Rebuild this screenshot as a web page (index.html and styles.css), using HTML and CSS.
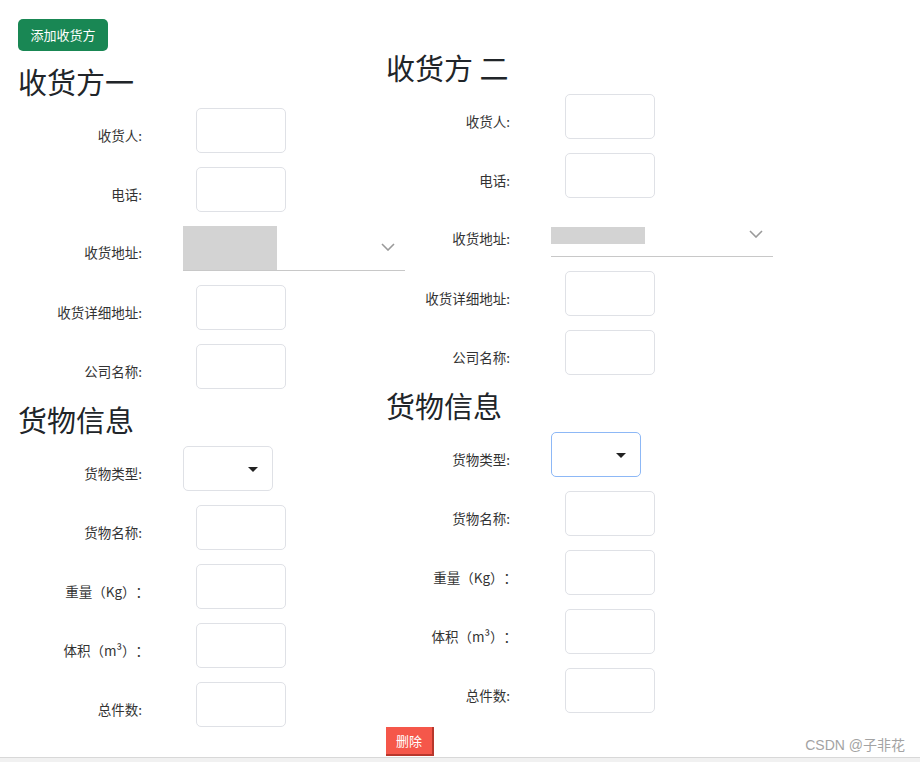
FILE: index.html
```html
<!DOCTYPE html>
<html lang="zh-CN">
<head>
<meta charset="utf-8">
<title>收货方</title>
<link rel="stylesheet" href="styles.css">
</head>
<body>
<div class="page">
  <div class="cols">
    <section class="col col-left">
      <button class="btn-add" type="button">添加收货方</button>
      <h2 class="title">收货方一</h2>
      <div class="row"><span class="label">收货人:</span><div class="input"></div></div>
      <div class="row"><span class="label">电话:</span><div class="input"></div></div>
      <div class="row"><span class="label label-sel">收货地址:</span>
        <div class="addr addr-tall"><span class="addr-block"></span>
          <svg class="chev" width="14" height="8" viewBox="0 0 14 8"><path d="M1 1 L7 7 L13 1" fill="none" stroke="#9a9a9a" stroke-width="1.6"/></svg>
        </div>
      </div>
      <div class="row"><span class="label">收货详细地址:</span><div class="input"></div></div>
      <div class="row"><span class="label">公司名称:</span><div class="input"></div></div>
      <h2 class="title">货物信息</h2>
      <div class="row"><span class="label">货物类型:</span><div class="type"><span class="caret"></span></div></div>
      <div class="row"><span class="label">货物名称:</span><div class="input"></div></div>
      <div class="row"><span class="label label-fw">重量（Kg）<span class="fw-colon">：</span></span><div class="input"></div></div>
      <div class="row"><span class="label label-fw">体积（m³）<span class="fw-colon">：</span></span><div class="input"></div></div>
      <div class="row"><span class="label">总件数:</span><div class="input"></div></div>
    </section>
    <section class="col col-right">
      <h2 class="title">收货方 二</h2>
      <div class="row"><span class="label">收货人:</span><div class="input"></div></div>
      <div class="row"><span class="label">电话:</span><div class="input"></div></div>
      <div class="row"><span class="label label-sel">收货地址:</span>
        <div class="addr addr-short"><span class="addr-block"></span>
          <svg class="chev" width="14" height="8" viewBox="0 0 14 8"><path d="M1 1 L7 7 L13 1" fill="none" stroke="#9a9a9a" stroke-width="1.6"/></svg>
        </div>
      </div>
      <div class="row"><span class="label">收货详细地址:</span><div class="input"></div></div>
      <div class="row"><span class="label">公司名称:</span><div class="input"></div></div>
      <h2 class="title">货物信息</h2>
      <div class="row"><span class="label">货物类型:</span><div class="type type-focus"><span class="caret"></span></div></div>
      <div class="row"><span class="label">货物名称:</span><div class="input"></div></div>
      <div class="row"><span class="label label-fw">重量（Kg）<span class="fw-colon">：</span></span><div class="input"></div></div>
      <div class="row"><span class="label label-fw">体积（m³）<span class="fw-colon">：</span></span><div class="input"></div></div>
      <div class="row"><span class="label">总件数:</span><div class="input"></div></div>
      <button class="btn-del" type="button">删除</button>
    </section>
  </div>
  <div class="watermark">CSDN @子非花</div>
</div>
</body>
</html>
```
FILE: styles.css
```css
html {
  background: #f1f1f1;
}
body {
  margin: 0;
  font-family: "Noto Sans CJK SC", "Noto Sans", sans-serif;
  color: #212529;
}
.page {
  position: relative;
  box-sizing: border-box;
  height: 758px;
  padding: 19px 0 0 18px;
  background: #fff;
  border-bottom: 1px solid #d8d8d8;
  overflow: hidden;
}
.cols {
  display: flex;
  align-items: flex-start;
}
.col {
  width: 368px;
  display: flex;
  flex-direction: column;
  align-items: flex-start;
}
.col-right {
  padding-top: 32px;
}
.btn-add {
  width: 90px;
  height: 32px;
  margin: 0 0 14px 0;
  padding: 0;
  border: none;
  border-radius: 5px;
  background: #198754;
  color: #fff;
  font-family: "Noto Sans CJK SC", sans-serif;
  font-size: 13px;
  line-height: 32px;
}
.title {
  margin: 0;
  height: 43px;
  font-size: 29px;
  line-height: 33px;
  font-weight: normal;
  color: #212529;
  white-space: nowrap;
}
.row {
  display: flex;
  align-items: center;
  height: 45px;
  margin-bottom: 14px;
}
.label {
  width: 124px;
  text-align: right;
  font-size: 13.5px;
  color: #333;
  padding-top: 8px;
  white-space: nowrap;
  text-spacing-trim: space-all;
}
.label-sel {
  padding-top: 7px;
}
.fw-colon {
  margin-right: -7px;
}
.input {
  box-sizing: border-box;
  width: 90px;
  height: 45px;
  margin-left: 54px;
  border: 1px solid #dfe1e6;
  border-radius: 5px;
}
.col-right .input {
  margin-left: 55px;
}
.addr {
  position: relative;
  box-sizing: border-box;
  width: 222px;
  height: 45px;
  margin-left: 41px;
  border-bottom: 1px solid #c8c8c8;
}
.addr-block {
  display: block;
  width: 94px;
  background: #d3d3d3;
}
.addr-tall .addr-block {
  height: 44px;
  margin-top: 0;
}
.addr-short .addr-block {
  height: 17px;
  margin-top: 15px;
}
.chev {
  position: absolute;
  right: 10px;
  top: 17px;
}
.addr-short .chev {
  top: 18px;
}
.type {
  position: relative;
  box-sizing: border-box;
  width: 90px;
  height: 45px;
  margin-left: 41px;
  border: 1px solid #dfe1e6;
  border-radius: 5px;
}
.type-focus {
  border-color: #8db8f6;
}
.caret {
  position: absolute;
  left: 64px;
  top: 20px;
  width: 0;
  height: 0;
  border-left: 5px solid transparent;
  border-right: 5px solid transparent;
  border-top: 5px solid #222;
}
.btn-del {
  box-sizing: border-box;
  width: 48px;
  height: 29px;
  margin: 0;
  padding: 0;
  border: none;
  border-right: 2px solid #b8372c;
  border-bottom: 2px solid #b8372c;
  background: #f5574a;
  color: #fff;
  font-family: "Noto Sans CJK SC", sans-serif;
  font-size: 13px;
  line-height: 27px;
}
.watermark {
  position: absolute;
  right: 15px;
  bottom: 3px;
  font-family: "Liberation Sans", "Noto Sans CJK SC", sans-serif;
  font-size: 14px;
  color: #a3a3a3;
}
```
